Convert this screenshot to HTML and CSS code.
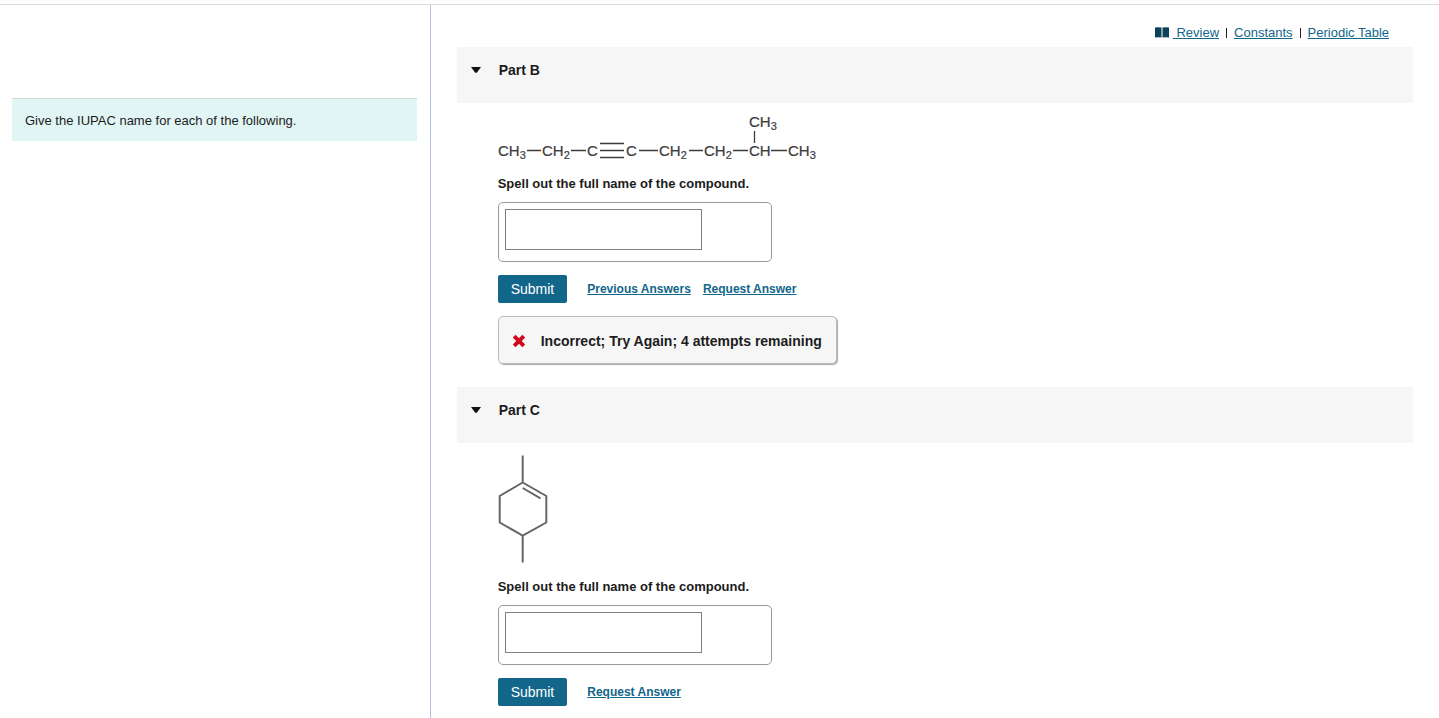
FILE: index.html
```html
<!DOCTYPE html>
<html lang="en">
<head>
<meta charset="utf-8">
<title>IUPAC Names</title>
<link rel="stylesheet" href="styles.css">
</head>
<body>
<div class="page">
  <aside class="intro">
    <p class="prompt">Give the IUPAC name for each of the following.</p>
  </aside>
  <main class="work">
    <nav class="tools">
      <a class="review" href="#"><svg class="book" viewBox="0 0 14 11" aria-hidden="true"><path d="M0 .6Q3.500 0 6.500 .6V10.500Q3.500 9.900 0 10.500ZM7.500 .6Q10.500 0 14 .6V10.500Q10.500 9.900 7.500 10.500Z"/></svg><span class="review-text">&nbsp;Review</span></a>
      <span class="bar"></span>
      <a href="#">Constants</a>
      <span class="bar"></span>
      <a href="#">Periodic Table</a>
    </nav>

    <section>
      <header class="part-head">
        <svg class="caret" viewBox="0 0 10 6" aria-hidden="true"><path d="M0 0H10L6 5.500Q5 6.200 4 5.500Z"/></svg>
        <h2>Part B</h2>
      </header>
      <form class="part-body">
        <svg class="chain" width="322" height="64" viewBox="0 0 322 64" role="img" aria-label="Structural formula">
          <g class="atoms">
            <text x="0" y="53">CH<tspan class="sub" dy="3">3</tspan></text>
            <text x="44" y="53">CH<tspan class="sub" dy="3">2</tspan></text>
            <text x="89" y="53">C</text>
            <text x="128" y="53">C</text>
            <text x="161" y="53">CH<tspan class="sub" dy="3">2</tspan></text>
            <text x="206" y="53">CH<tspan class="sub" dy="3">2</tspan></text>
            <text x="251" y="53">CH</text>
            <text x="290" y="53">CH<tspan class="sub" dy="3">3</tspan></text>
            <text x="251" y="24">CH<tspan class="sub" dy="3">3</tspan></text>
          </g>
          <path class="bonds" d="M29 47.500H43M73 47.500H88M102 40.500H126M102 47.500H126M102 54.500H126M141 47.500H160M191 47.500H205M235 47.500H250M273 47.500H289M256.500 28V40"/>
        </svg>
        <label class="question" for="answer-b">Spell out the full name of the compound.</label>
        <div class="answer-box"><input class="answer" id="answer-b" type="text"></div>
        <div class="actions">
          <button class="submit" type="button">Submit</button>
          <a href="#">Previous Answers</a>
          <a href="#">Request Answer</a>
        </div>
        <div class="feedback">
          <svg class="cross" viewBox="0 0 14 14" aria-hidden="true"><path d="M2.200 2.200L11.800 11.800M11.800 2.200L2.200 11.800"/></svg>
          <strong>Incorrect; Try Again; 4 attempts remaining</strong>
        </div>
      </form>
    </section>

    <section>
      <header class="part-head">
        <svg class="caret" viewBox="0 0 10 6" aria-hidden="true"><path d="M0 0H10L6 5.500Q5 6.200 4 5.500Z"/></svg>
        <h2>Part C</h2>
      </header>
      <form class="part-body">
        <svg class="ring" width="52" height="128" viewBox="0 0 52 128" role="img" aria-label="Skeletal formula">
          <path class="bonds ring-bonds" d="M24.700 12.500V39.500L48.300 53V79.500L24.700 92.700L1.700 79.500V53L24.700 39.500M24.700 92.700V119.500M24.700 45L42.500 55.300"/>
        </svg>
        <label class="question" for="answer-c">Spell out the full name of the compound.</label>
        <div class="answer-box"><input class="answer" id="answer-c" type="text"></div>
        <div class="actions">
          <button class="submit" type="button">Submit</button>
          <a href="#">Request Answer</a>
        </div>
      </form>
    </section>
  </main>
</div>
</body>
</html>
```
FILE: styles.css
```css
* { box-sizing: border-box; }
body {
  margin: 0;
  padding-top: 4px;
  background: #fff;
  color: #1c1c1c;
  font: 13px/16px "Liberation Sans", Arial, sans-serif;
}
h2, p { margin: 0; }
svg { display: block; flex: none; }
a { color: #11668a; text-underline-offset: 1px; }

.page {
  display: grid;
  grid-template-columns: calc(30% - 1px) 1fr;
  min-height: calc(100vh - 4px);
  border-top: 1px solid #dcdcdc;
}
.intro {
  padding: 93px 13px 0 12px;
  border-right: 1px solid #b3c2da;
}
.prompt {
  padding: 14px 13px 12px;
  border-top: 1px solid #cfdcdc;
  background: #e1f5f4;
}
.work { padding: 0 26px; }

.tools {
  display: flex;
  align-items: center;
  justify-content: flex-end;
  gap: 7px;
  height: 42px;
  padding: 13px 24px 0 0;
}
.review { display: flex; align-items: center; gap: 4px; text-decoration: none; }
.review-text { text-decoration: underline; }
.book { width: 14px; height: 11px; fill: #0b4259; }
.bar { width: 1px; height: 10px; background: #222; }

.part-head {
  display: flex;
  align-items: flex-start;
  gap: 18px;
  height: 56px;
  padding: 15px 14px;
  background: #f6f6f6;
}
.part-head h2 { font-size: 14px; line-height: 16px; }
.caret { width: 10px; height: 6px; margin-top: 5px; fill: #111; }
.part-body {
  display: flex;
  flex-direction: column;
  align-items: flex-start;
  padding: 0 0 23px 41px;
}
.chain { margin-bottom: 9px; }
.ring { margin-bottom: 8px; }
.atoms { font-size: 15px; fill: #3c3c3c; stroke: #3c3c3c; stroke-width: .2; }
.sub { font-size: 11px; }
.bonds { fill: none; stroke: #3c3c3c; stroke-width: 1.3; }
.ring-bonds { stroke: #666; stroke-width: 2; }

.question { font-weight: bold; }
.answer-box {
  width: 274px;
  height: 60px;
  margin-top: 10px;
  padding: 6px;
  border: 1px solid #999;
  border-radius: 5px;
}
.answer {
  display: block;
  width: 197px;
  height: 41px;
  padding: 4px;
  border: 1px solid #808080;
  border-radius: 0;
  background: #fff;
  font: inherit;
}
.actions {
  display: flex;
  align-items: center;
  gap: 12px;
  margin-top: 13px;
  font-size: 12px;
  font-weight: bold;
}
.submit {
  height: 28px;
  margin-right: 8px;
  padding: 0 13px;
  border: 0;
  border-radius: 2px;
  background: #11668a;
  color: #fff;
  font: 14px/16px "Liberation Sans", Arial, sans-serif;
}
.feedback {
  display: flex;
  align-items: center;
  gap: 15px;
  height: 48px;
  margin-top: 13px;
  padding: 1px 14px 0 13px;
  border: 1px solid #bbb;
  border-radius: 5px;
  background: #f6f6f6;
  box-shadow: 1px 1px 1px #aaa;
  font-size: 14px;
}
.cross { width: 14px; height: 14px; fill: none; stroke: #cf0a20; stroke-width: 4; }
```
